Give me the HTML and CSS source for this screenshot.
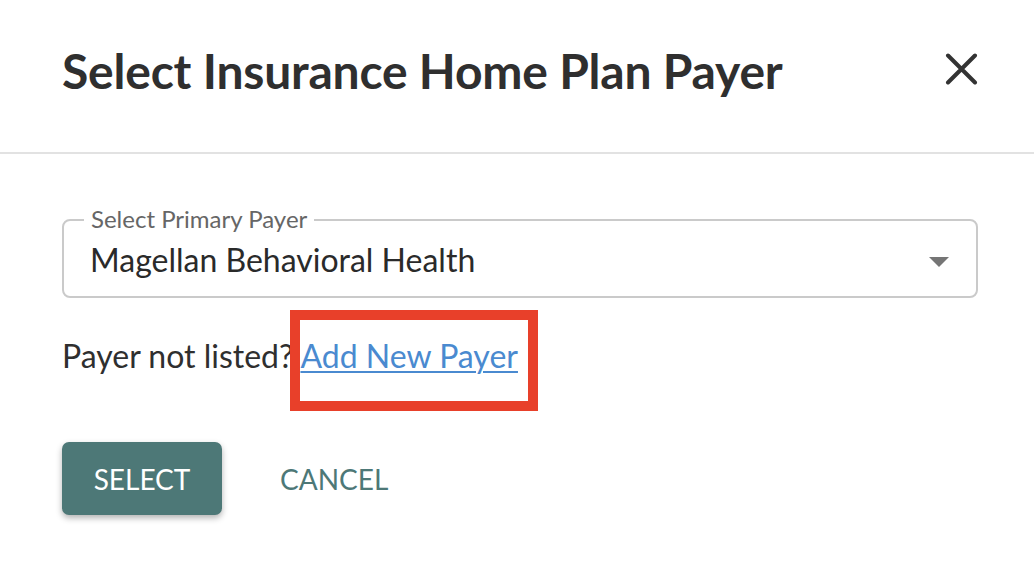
FILE: index.html
```html
<!DOCTYPE html>
<html lang="en">
<head>
  <meta charset="UTF-8" />
  <meta name="viewport" content="width=device-width, initial-scale=1.0"/>
  <title>Select Insurance Home Plan Payer</title>
  <link rel="stylesheet" href="styles.css">
</head>
<body>

<!-- Dialog -->
<div class="dialog">

  <!-- Title bar -->
  <header class="dialog-header">
    <h1 class="dialog-title">Select Insurance Home Plan Payer</h1>
    <button class="close-btn" aria-label="Close">
      <svg width="33" height="32" viewBox="0 0 33 32">
        <path d="M3 2.5 L30 29.5 M30 2.5 L3 29.5" stroke="#333" stroke-width="4" stroke-linecap="round" fill="none"/>
      </svg>
    </button>
  </header>

  <!-- Body -->
  <div class="dialog-body">
    <div class="field">
      <span class="field-label">Select Primary Payer</span>
      <div class="field-value">Magellan Behavioral Health</div>
      <span class="field-arrow"></span>
    </div>

    <p class="payer-note">
      Payer not listed? <a class="add-link" href="#">Add New Payer</a>
      <span class="highlight-box"></span>
    </p>

    <div class="actions">
      <button class="btn btn-primary">SELECT</button>
      <button class="btn btn-text">CANCEL</button>
    </div>
  </div>

</div>

</body>
</html>
```

FILE: styles.css
```css
* {
  margin: 0;
  padding: 0;
  box-sizing: border-box;
}

body {
  background-color: white;
  font-family: Lato, 'Open Sans', sans-serif;
  color: #2f2f2f;
}

.dialog {
  width: 1034px;
  height: 574px;
}

/* HEADER */
.dialog-header {
  display: flex;
  align-items: center;
  justify-content: space-between;
  height: 154px;
  padding: 0 56px 12px 62px;
  border-bottom: 2px solid #e2e2e2;
}

.dialog-title {
  font-size: 48px;
  font-weight: 700;
  letter-spacing: -0.2px;
  color: #2f2f2f;
}

.close-btn {
  background: none;
  border: none;
  display: flex;
  margin-top: -2px;
  cursor: pointer;
}

/* BODY */
.dialog-body {
  padding: 65px 56px 0 62px;
}

.field {
  position: relative;
  height: 79px;
  border: 2px solid #cacaca;
  border-radius: 8px;
  display: flex;
  align-items: center;
  padding: 2px 26px 0 26px;
}

.field-label {
  position: absolute;
  top: -17px;
  left: 20px;
  padding: 0 7px;
  background: white;
  font-size: 24px;
  color: #666;
}

.field-value {
  font-size: 32px;
  color: #2a2a2a;
  flex: 1;
}

.field-arrow {
  width: 0;
  height: 0;
  border-left: 10px solid transparent;
  border-right: 10px solid transparent;
  border-top: 10px solid #757575;
  margin: 4px 1px 0 0;
}

.payer-note {
  position: relative;
  margin-top: 36px;
  font-size: 32px;
  line-height: 44px;
  color: #2f2f2f;
}

.add-link {
  color: #4a8ad0;
  text-decoration: underline;
  text-decoration-thickness: 2px;
  text-underline-offset: 3px;
}

/* annotation frame around the link */
.highlight-box {
  position: absolute;
  left: 228px;
  top: -24px;
  width: 248px;
  height: 101px;
  border: 10px solid #e8402a;
  pointer-events: none;
}

.actions {
  display: flex;
  align-items: center;
  gap: 28px;
  margin-top: 64px;
}

.btn {
  font-family: Lato, 'Open Sans', sans-serif;
  font-size: 28px;
  border: none;
  background: none;
  cursor: pointer;
}

.btn-primary {
  width: 160px;
  height: 73px;
  background-color: #4d7877;
  color: white;
  border-radius: 7px;
  box-shadow: 0 3px 6px rgba(0, 0, 0, 0.3);
}

.btn-text {
  color: #4d7877;
  padding: 0 30px;
}
```
